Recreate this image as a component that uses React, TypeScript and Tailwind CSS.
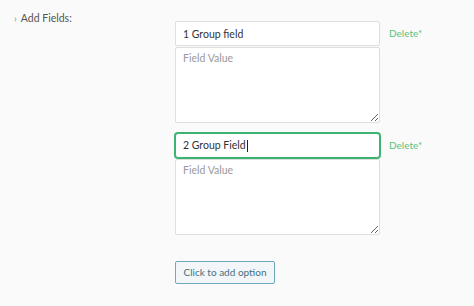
import React from "react";

const font = { fontFamily: 'Lato, "Open Sans", sans-serif' };

const FieldGroup = ({ name, focused }: { name: string; focused?: boolean }) => {
  return (
    <div className="flex items-start">
      <div className="flex w-[205px] flex-col gap-px">
        {focused ? (
          <div className="flex h-[25px] items-center rounded-[3px] border border-[#3cb371] bg-white px-[7px] text-[10.5px] text-[#333] ring-1 ring-[#3cb371]">
            <span>{name}</span>
            <span className="ml-px inline-block h-[12px] w-px bg-[#222]" />
          </div>
        ) : (
          <input
            readOnly
            value={name}
            className="h-[25px] rounded-[2px] border border-[#dedede] bg-white px-[7px] text-[10.5px] text-[#333] outline-none"
            style={font}
          />
        )}
        <textarea
          placeholder="Field Value"
          className="h-[76px] rounded-[2px] border border-[#dedede] bg-white px-[7px] py-[3px] text-[10.5px] text-[#333] outline-none placeholder:text-[#999]"
          style={font}
        />
      </div>
      <span className="ml-[9px] flex h-[25px] items-center text-[10px] text-[#5cbf7c]">Delete*</span>
    </div>
  );
};

export default function App() {
  return (
    <div className="flex h-[306px] w-[474px] bg-[#fafafa]" style={font}>
      <div className="flex w-[175px] items-start pl-[14px] pt-[11px] text-[10.5px] text-[#555]">
        <span className="mr-[4px] text-[10px] text-[#888]">›</span>
        <span>Add Fields:</span>
      </div>
      <div className="flex flex-col pt-[21px]">
        <FieldGroup name="1 Group field" />
        <div className="h-[10px]" />
        <FieldGroup name="2 Group Field" focused />
        <div>
          <button className="mt-[26px] h-[23px] w-[100px] rounded-[2px] border border-[#6fa8bb] bg-[#f2f6f8] text-[10px] text-[#47707f]">
            Click to add option
          </button>
        </div>
      </div>
    </div>
  );
}
